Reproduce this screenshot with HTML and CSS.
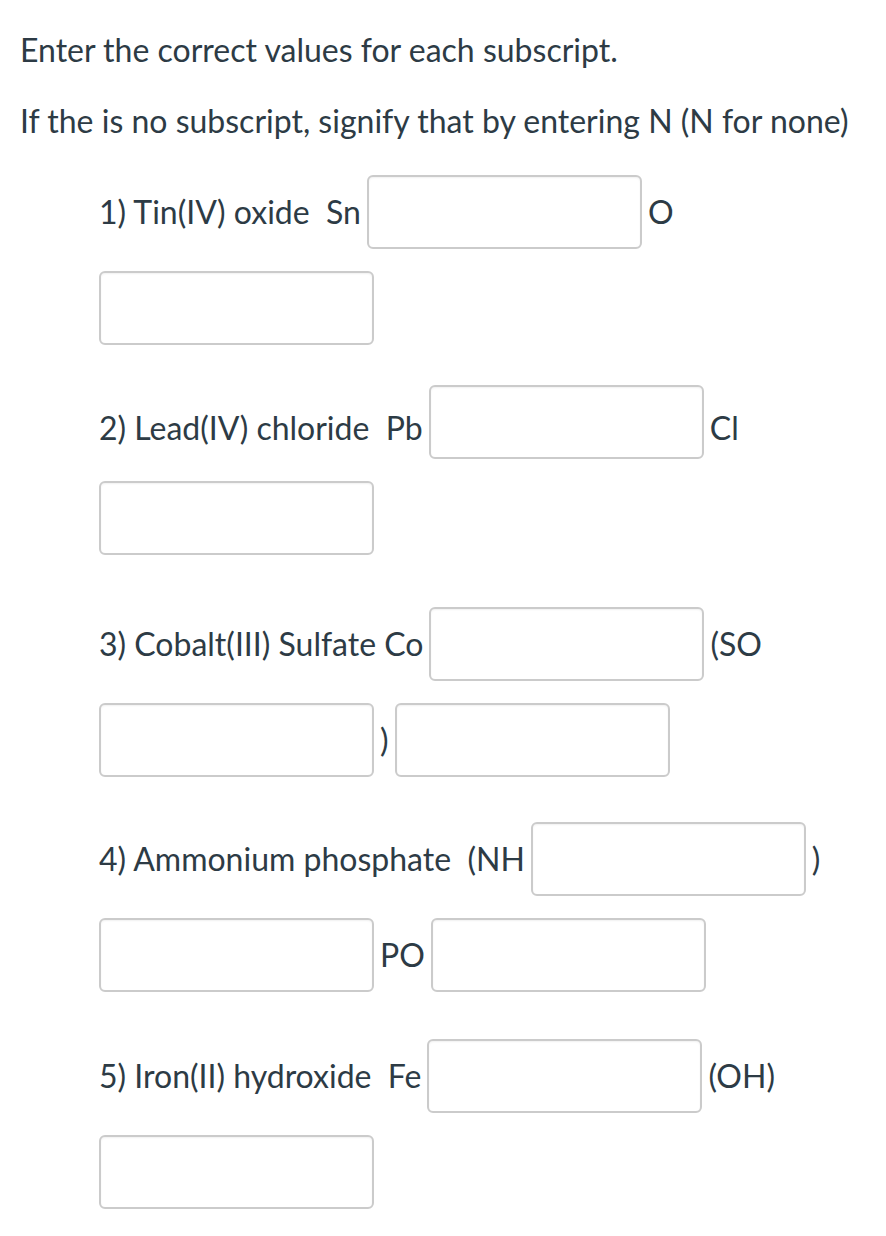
FILE: index.html
```html
<!DOCTYPE html>
<html lang="en">
<head>
<meta charset="utf-8">
<title>Subscripts</title>
<link rel="stylesheet" href="styles.css">
</head>
<body>
<div class="page">
  <p class="intro">Enter the correct values for each subscript.</p>
  <p class="intro">If the is no subscript, signify that by entering N (N for none)</p>

  <div class="item item-1">
    <div class="row"><span class="txt">1) Tin(IV) oxide&nbsp; Sn</span><input class="box" type="text"><span class="txt">O</span></div>
    <div class="row"><input class="box" type="text"></div>
  </div>

  <div class="item item-2">
    <div class="row row-low"><span class="txt">2) Lead(IV) chloride&nbsp; Pb</span><input class="box" type="text"><span class="txt">Cl</span></div>
    <div class="row"><input class="box" type="text"></div>
  </div>

  <div class="item item-3">
    <div class="row"><span class="txt">3) Cobalt(III) Sulfate Co</span><input class="box" type="text"><span class="txt">(SO</span></div>
    <div class="row"><input class="box" type="text"><span class="txt">)</span><input class="box" type="text"></div>
  </div>

  <div class="item item-4">
    <div class="row"><span class="txt">4) Ammonium phosphate&nbsp; (NH</span><input class="box" type="text"><span class="txt">)</span></div>
    <div class="row"><input class="box" type="text"><span class="txt">PO</span><input class="box" type="text"></div>
  </div>

  <div class="item item-5">
    <div class="row"><span class="txt">5) Iron(II) hydroxide&nbsp; Fe</span><input class="box" type="text"><span class="txt">(OH)</span></div>
    <div class="row"><input class="box" type="text"></div>
  </div>
</div>
</body>
</html>
```

FILE: styles.css
```css
html, body {
  margin: 0;
  padding: 0;
  background: #ffffff;
}

.page {
  padding: 26px 20px 0 20px;
  font-family: Lato, "Open Sans", sans-serif;
  font-size: 32px;
  line-height: 48px;
  color: #2d3b45;
}

.intro {
  margin: 0 0 23px 0;
}

.item {
  padding-left: 79px;
}

.item-1 { margin-top: 30px; }
.item-2 { margin-top: 40px; }
.item-3 { margin-top: 52px; }
.item-4 { margin-top: 45px; }
.item-5 { margin-top: 47px; }

.row {
  display: flex;
  align-items: center;
  gap: 6px;
  height: 74px;
}

.row + .row {
  margin-top: 22px;
}

.row-low .txt {
  padding-top: 12px;
}

.txt {
  white-space: pre;
}

.box {
  box-sizing: border-box;
  flex: none;
  width: 275px;
  height: 74px;
  margin: 0;
  padding: 0 10px;
  border: 2px solid #cbcbcb;
  border-radius: 6px;
  background: #ffffff;
  box-shadow: inset 0 1px 2px rgba(0, 0, 0, 0.06);
  font: inherit;
  outline: none;
}
```
